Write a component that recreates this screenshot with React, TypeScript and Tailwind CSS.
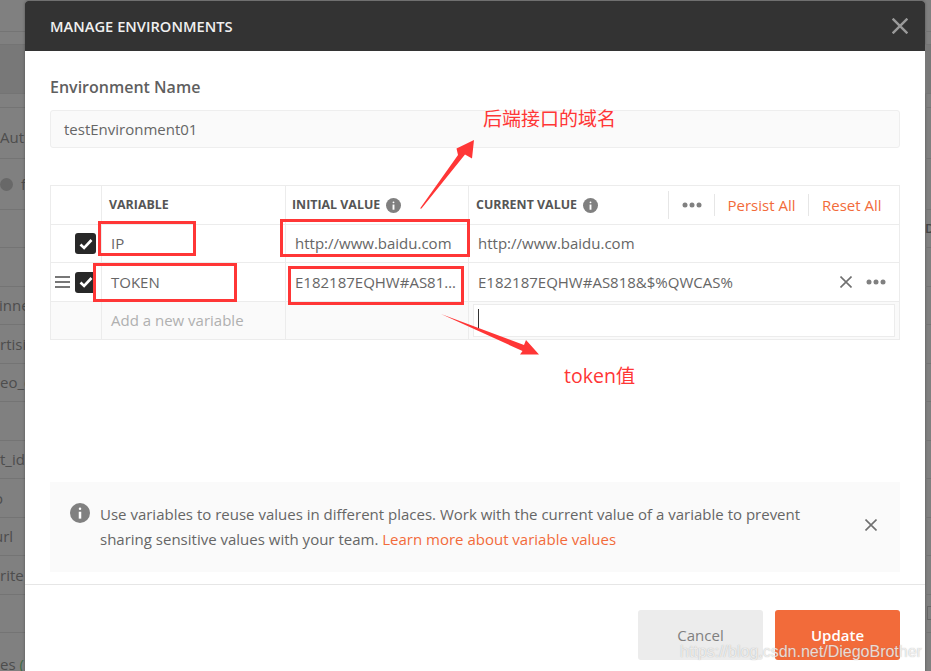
import React from 'react';

const sideRows = [
  { h: 'h-[32px]', text: '', cls: '' },
  { h: 'h-[13px]', text: '', cls: '' },
  { h: 'h-[49px]', text: '', cls: 'bg-[#787878]' },
  { h: 'h-[14px]', text: '', cls: '' },
  { h: 'h-[51px]', text: 'Auth', cls: 'pt-[9px]' },
  { h: 'h-[51px]', text: 'f', cls: '', dot: true },
  { h: 'h-[38px]', text: '', cls: '' },
  { h: 'h-[39px]', text: '', cls: '' },
  { h: 'h-[38px]', text: 'inne', cls: '-ml-[1px]' },
  { h: 'h-[39px]', text: 'rtisi', cls: '' },
  { h: 'h-[38px]', text: 'eo_c', cls: '' },
  { h: 'h-[39px]', text: '', cls: '' },
  { h: 'h-[38px]', text: 't_id', cls: '' },
  { h: 'h-[39px]', text: 'o', cls: '-ml-[6px]' },
  { h: 'h-[38px]', text: 'url', cls: '-ml-[6px]' },
  { h: 'h-[39px]', text: 'rite', cls: '' },
  { h: 'h-[38px]', text: '', cls: '' },
];

function InfoIcon({ size = 14 }: { size?: number }) {
  return (
    <svg width={size} height={size} viewBox="0 0 16 16" className="shrink-0">
      <circle cx="8" cy="8" r="8" fill="#808080" />
      <rect x="7" y="7" width="2" height="5.5" fill="#fff" />
      <rect x="7" y="3.6" width="2" height="2" rx="1" fill="#fff" />
    </svg>
  );
}

function Close({ size = 12, color = '#808080', stroke = 1.6 }: { size?: number; color?: string; stroke?: number }) {
  return (
    <svg width={size} height={size} viewBox="0 0 12 12" className="shrink-0">
      <path d="M.5.5l11 11M11.5.5l-11 11" stroke={color} strokeWidth={stroke} fill="none" />
    </svg>
  );
}

function Dots() {
  return (
    <svg width="20" height="6" viewBox="0 0 20 6" className="shrink-0">
      <circle cx="3" cy="3" r="2.5" fill="#808080" />
      <circle cx="10" cy="3" r="2.5" fill="#808080" />
      <circle cx="17" cy="3" r="2.5" fill="#808080" />
    </svg>
  );
}

function Check() {
  return (
    <div className="w-[21px] h-[21px] rounded-[3px] bg-[#282828] flex items-center justify-center">
      <svg width="14" height="12" viewBox="0 0 14 12">
        <path d="M1.500 6.500l3.600 3.500 7.400-8" stroke="#fff" strokeWidth="2.600" fill="none" />
      </svg>
    </div>
  );
}

export default function App() {
  return (
    <div className="relative w-[931px] h-[671px] overflow-hidden bg-[#808080] flex font-['Open_Sans',sans-serif] text-[#505050]">
      {/* dimmed app behind the modal */}
      <div className="w-[25px] shrink-0 flex flex-col overflow-hidden text-[15px] text-[#4d4d4d]">
        {sideRows.map((r, i) => (
          <div key={i} className={`${r.h} shrink-0 border-b border-[#747474] flex items-center whitespace-nowrap ${r.cls}`}>
            {r.dot && <span className="w-[13px] h-[13px] rounded-full bg-[#686868] mr-2 shrink-0" />}
            {r.text}
          </div>
        ))}
        <div className="flex-1 pt-[21px] leading-[20px] whitespace-nowrap">
          es <span className="text-[#3f6b45]">(1</span>
        </div>
      </div>

      {/* modal */}
      <div className="w-[900px] shrink-0 mt-px h-[680px] bg-white rounded-t-[3px] flex flex-col shadow-[0_0_3px_rgba(0,0,0,0.35)]">
        <div className="h-[50px] shrink-0 bg-[#333333] rounded-t-[3px] pl-[25px] pr-[17px] flex items-center justify-between">
          <span className="text-[14.700px] font-semibold text-[#f0f0f0]">MANAGE ENVIRONMENTS</span>
          <Close size={16} color="#9a9a9a" stroke={1.800} />
        </div>

        <div className="px-[25px] flex flex-col">
          <div className="mt-[25px] text-[16px] font-semibold text-[#5f5f5f] leading-[22px]">Environment Name</div>
          <div className="mt-[12px] h-[38px] rounded-[3px] border border-[#eeeeee] bg-[#fafafa] pl-[13px] flex items-center text-[15px] text-[#666666]">testEnvironment01</div>

          {/* variables table */}
          <div className="mt-[37px] border border-[#ececec] text-[15px]">
            <div className="grid grid-cols-[51px_184px_183px_1fr] h-[39px] border-b border-[#ececec] text-[12.400px] font-bold text-[#555555]">
              <div className="border-r border-[#ececec]" />
              <div className="border-r border-[#ececec] pl-[7px] flex items-center">VARIABLE</div>
              <div className="border-r border-[#ececec] pl-[6px] flex items-center gap-[6px]">INITIAL VALUE <InfoIcon size={15} /></div>
              <div className="pl-[7px] flex items-center gap-[6px]">
                CURRENT VALUE <InfoIcon size={15} />
                <div className="ml-auto flex items-center h-full font-normal text-[15px] text-[#f26b3a]">
                  <div className="w-[46px] h-[28px] border-l border-[#e6e6e6] flex items-center justify-center"><Dots /></div>
                  <div className="w-[94px] h-[22px] border-l border-[#e6e6e6] flex items-center justify-center">Persist All</div>
                  <div className="w-[91px] h-[22px] border-l border-[#e6e6e6] flex items-center pl-[13px]">Reset All</div>
                </div>
              </div>
            </div>

            <div className="grid grid-cols-[51px_184px_183px_1fr] h-[38px] border-b border-[#ececec] text-[#666666]">
              <div className="border-r border-[#ececec] flex items-center justify-end pr-[5px]"><Check /></div>
              <div className="border-r border-[#ececec] pl-[9px] flex items-center">IP</div>
              <div className="border-r border-[#ececec] pl-[9px] flex items-center">http://www.baidu.com</div>
              <div className="pl-[9px] flex items-center">http://www.baidu.com</div>
            </div>

            <div className="grid grid-cols-[51px_184px_183px_1fr] h-[39px] border-b border-[#ececec] text-[#666666]">
              <div className="border-r border-[#ececec] flex items-center justify-end pr-[5px] gap-[5px]">
                <svg width="15" height="12" viewBox="0 0 15 12" className="shrink-0">
                  <path d="M0 1h15M0 6h15M0 11h15" stroke="#777" strokeWidth="1.800" />
                </svg>
                <Check />
              </div>
              <div className="border-r border-[#ececec] pl-[9px] flex items-center">TOKEN</div>
              <div className="border-r border-[#ececec] pl-[9px] pr-[8px] flex items-center min-w-0"><span className="truncate">E182187EQHW#AS818&amp;$%QWCAS%</span></div>
              <div className="pl-[9px] pr-[13px] flex items-center">
                E182187EQHW#AS818&amp;$%QWCAS%
                <span className="ml-auto mr-[14px]"><Close size={12} color="#707070" /></span>
                <Dots />
              </div>
            </div>

            <div className="grid grid-cols-[51px_184px_183px_1fr] h-[37px] bg-[#fafafa]">
              <div className="border-r border-[#ececec]" />
              <div className="border-r border-[#ececec] pl-[9px] flex items-center text-[#b0b0b0]">Add a new variable</div>
              <div className="border-r border-[#ececec]" />
              <div className="px-[4px] py-[2px]">
                <div className="h-full border border-[#ececec] bg-white pl-[4px] pt-[4px]">
                  <div className="w-px h-[19px] bg-[#333]" />
                </div>
              </div>
            </div>
          </div>

          {/* hint */}
          <div className="mt-[142px] h-[90px] bg-[#fafafa] flex pl-[20px] pr-[23px] pt-[20px]">
            <span className="mt-[1px]"><InfoIcon size={20} /></span>
            <p className="ml-[10px] w-[730px] text-[15px] leading-[25px] text-[#666666]">
              Use variables to reuse values in different places. Work with the current value of a variable to prevent sharing sensitive values with your team. <span className="text-[#f26b3a]">Learn more about variable values</span>
            </p>
            <span className="ml-auto mt-[17px]"><Close size={12} color="#707070" /></span>
          </div>
        </div>

        <div className="mt-[12px] border-t border-[#e6e6e6] px-[25px] pt-[25px] flex justify-end gap-[12px]">
          <div className="w-[125px] h-[50px] rounded-[3px] bg-[#ececec] text-[#808080] text-[15px] flex items-center justify-center">Cancel</div>
          <div className="w-[125px] h-[50px] rounded-[3px] bg-[#f26b3a] text-white text-[15px] font-semibold flex items-center justify-center">Update</div>
        </div>
      </div>

      {/* strip right of the modal */}
      <div className="flex-1 flex flex-col">
        {sideRows.map((r, i) => (
          <div key={i} className={`${r.h} shrink-0 border-b border-[#747474] ${i === 2 ? 'bg-[#787878]' : ''}`} />
        ))}
      </div>
      <span className="absolute left-[925px] top-[219px] text-[13px] leading-[18px] font-semibold text-[#444]">D</span>
      <div className="absolute left-[927px] top-[606px] w-[6px] h-[14px] border border-[#666]" />

      {/* annotations pasted on the screenshot */}
      <div className="absolute left-[98px] top-[221px] w-[98px] h-[35px] border-[3px] border-[#ff3636]" />
      <div className="absolute left-[280px] top-[219px] w-[190px] h-[38px] border-[3px] border-[#ff3636]" />
      <div className="absolute left-[93px] top-[263px] w-[144px] h-[39px] border-[3px] border-[#ff3636]" />
      <div className="absolute left-[288px] top-[266px] w-[176px] h-[39px] border-[3px] border-[#ff3636]" />
      <svg className="absolute left-0 top-0 pointer-events-none" width="931" height="671" viewBox="0 0 931 671">
        <path d="M420 208.500L458 155L456.500 148.500L474 140L472 158.500L465 154.500L421.500 208.500Z" fill="#ff3636" />
        <path d="M441 314L524 345L526 340L539 354.500L520 354.500L522.500 351Z" fill="#ff3636" />
      </svg>
      <span className="absolute left-[483px] top-[104px] text-[19px] leading-[28px] text-[#ff3636] font-['Noto_Sans_CJK_SC',sans-serif]">后端接口的域名</span>
      <span className="absolute left-[564px] top-[362px] text-[19.500px] leading-[28px] text-[#ff3636] font-['Open_Sans','Noto_Sans_CJK_SC',sans-serif]">token值</span>
      <span className="absolute left-[680px] top-[641px] text-[16px] leading-[22px] text-white/75 font-['Liberation_Sans',sans-serif] [text-shadow:0_0_1px_rgba(120,120,120,0.6)]">https://blog.csdn.net/DiegoBrother</span>
    </div>
  );
}
